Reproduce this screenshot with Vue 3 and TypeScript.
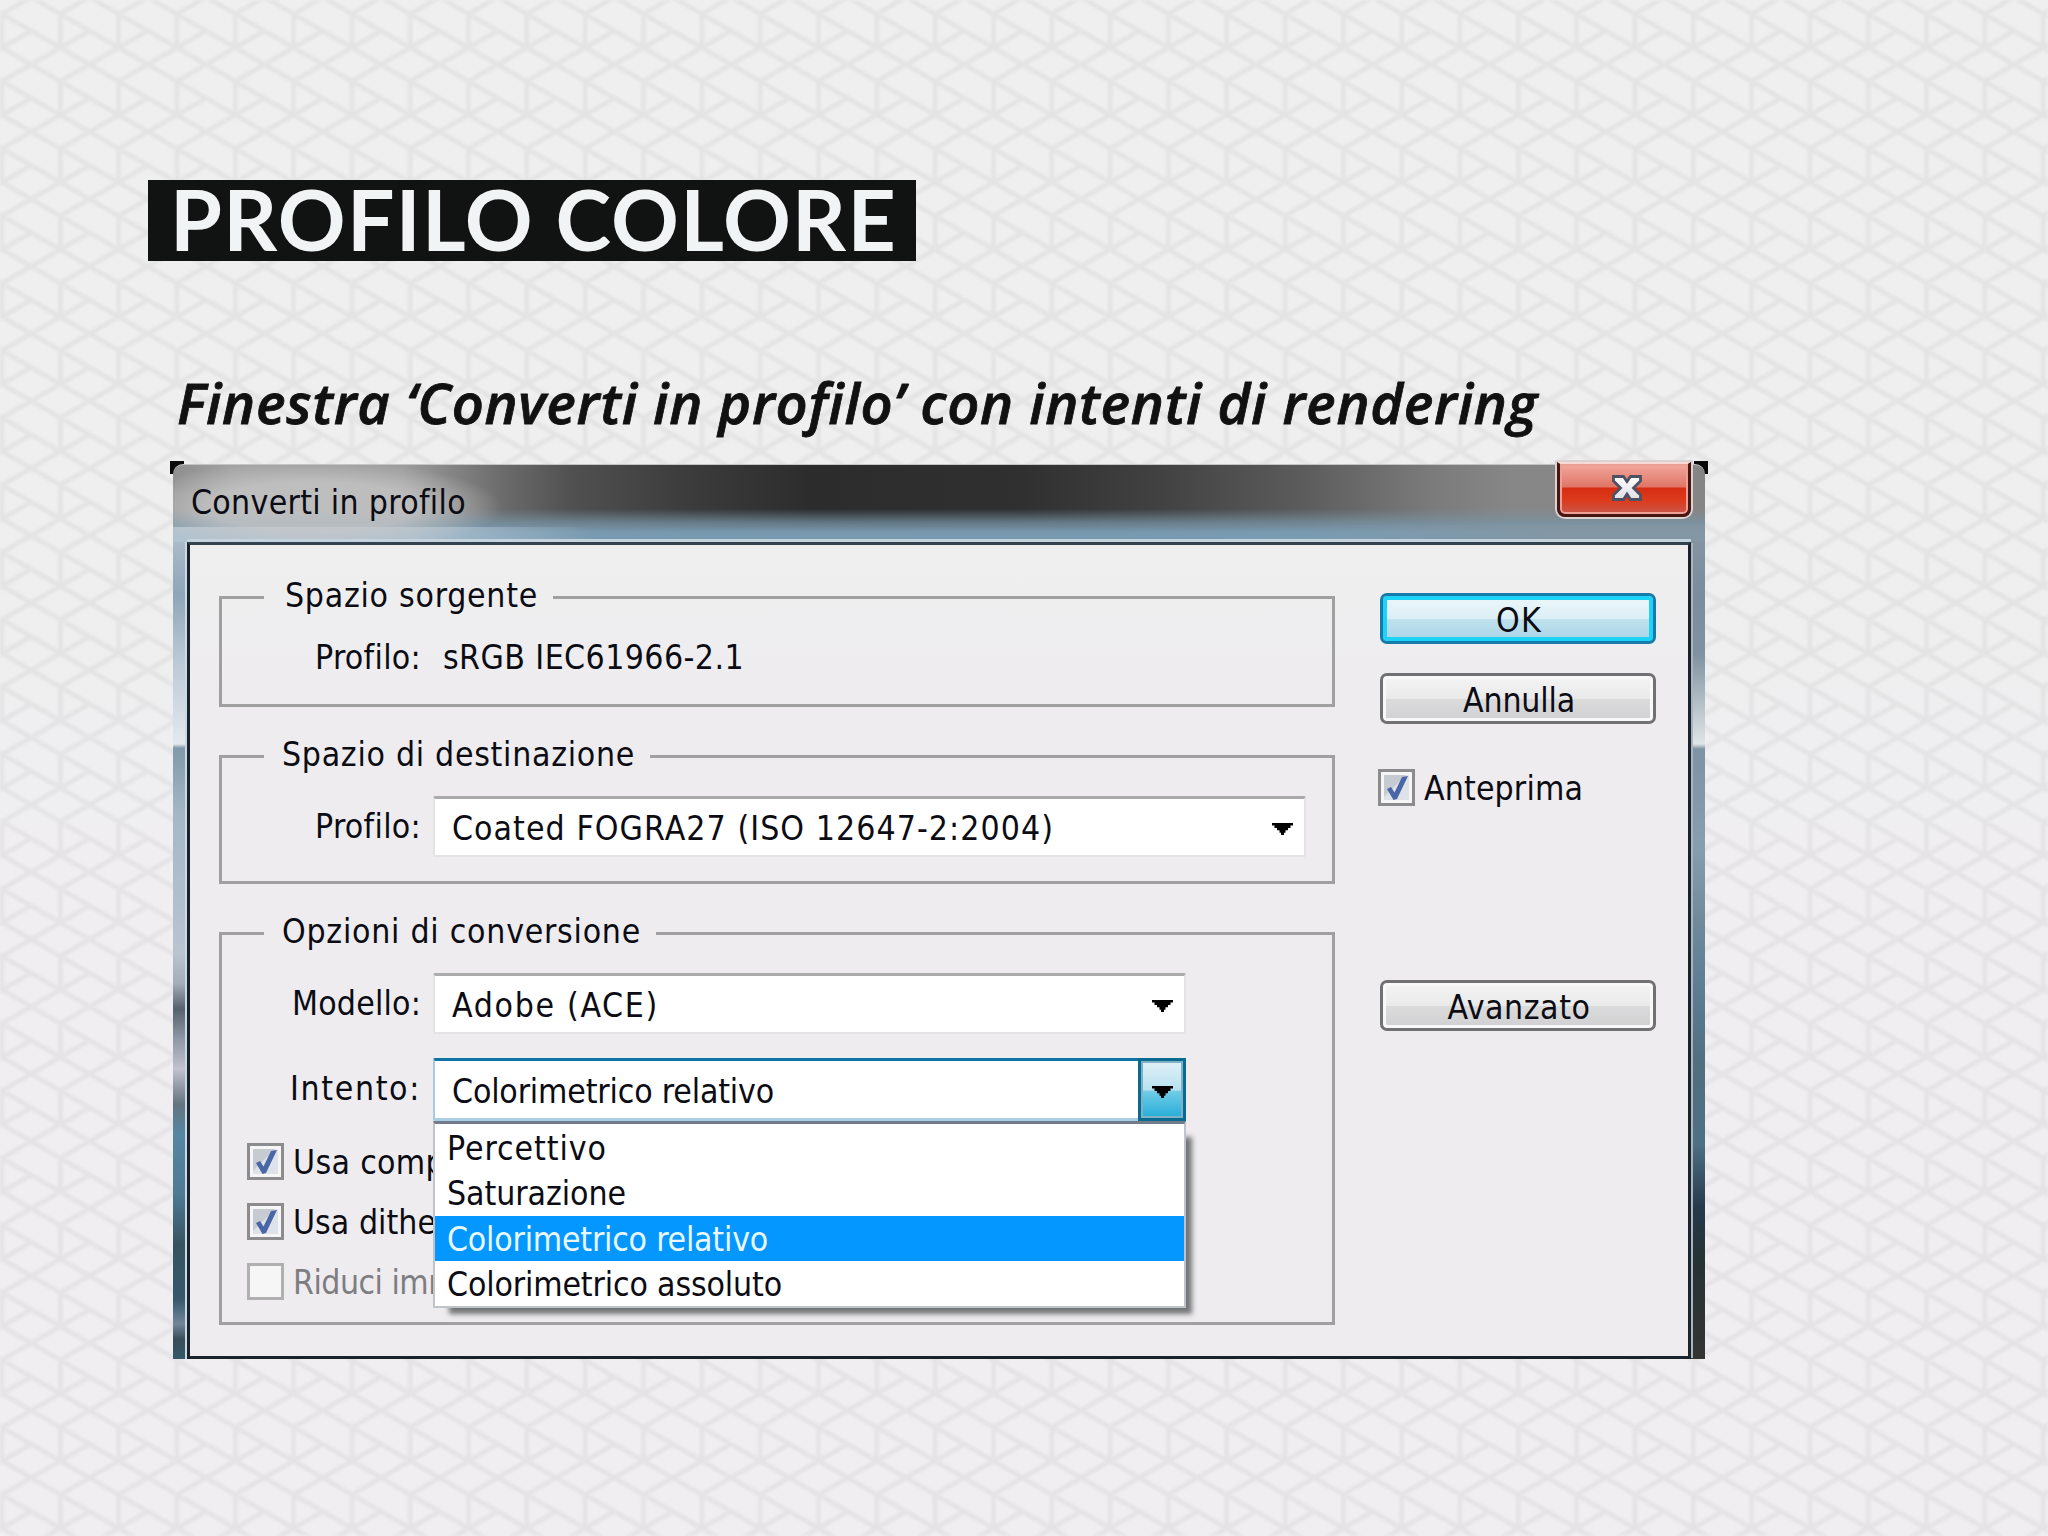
<script setup lang="ts">
import { ref } from 'vue'

interface Check {
  label: string
  width: number
  checked: boolean
}

const intents = [
  { label: 'Percettivo', width: 160 },
  { label: 'Saturazione', width: 179 },
  { label: 'Colorimetrico relativo', width: 321 },
  { label: 'Colorimetrico assoluto', width: 335 },
]
const selected = ref('Colorimetrico relativo')

const checks: Check[] = [
  { label: 'Usa comp', width: 152, checked: true },
  { label: 'Usa dithe', width: 143, checked: true },
  { label: 'Riduci imm', width: 164, checked: false },
]

// Tracks a label out (or in) until it fills the given width.
const vFit = {
  mounted(el: HTMLElement, binding: { value: number }) {
    el.style.letterSpacing = '0px'
    const natural = el.getBoundingClientRect().width
    const count = (el.textContent ?? '').length
    el.style.letterSpacing = `${(binding.value - natural) / count}px`
  },
}
</script>

<template>
  <main class="slide">
    <svg class="lattice" width="2048" height="1536" aria-hidden="true">
      <defs>
        <pattern id="lattice" x="1.98" y="14" width="58.32" height="67.3" patternUnits="userSpaceOnUse">
          <path
            d="M0 0V33.65M58.32 0V33.65M-5 -2.88L63.32 36.53M-5 30.77L63.32 70.18M-5 64.42L5 70.18M53.32 -2.88L63.32 2.88M-5 70.18L63.32 30.77M-5 36.53L29.16 16.82M-5 2.88L5 -2.88M53.32 70.18L63.32 64.42"
            fill="none"
            stroke="#8c8890"
            stroke-opacity=".1"
            stroke-width="4.6"
          />
        </pattern>
        <symbol id="box-on" viewBox="0 0 37 37">
          <rect x="1.5" y="1.5" width="34" height="34" fill="#f6f6f7" stroke="#8c8c8e" stroke-width="3" />
          <rect x="6" y="6" width="25" height="25" fill="#dfe3e9" />
          <path d="M6 6H28L6 28Z" fill="#c6cad1" />
          <path d="M9 20L13 18L16.500 23.500L24 8L30 7L19 30L15.500 31Z" fill="#4966a6" />
        </symbol>
        <symbol id="box-off" viewBox="0 0 37 37">
          <rect x="1.500" y="1.500" width="34" height="34" fill="#f7f6f7" stroke="#b0b0b1" stroke-width="3" />
        </symbol>
        <symbol id="arrow" viewBox="0 0 21 12">
          <path d="M0 0H21V2.500H18.500V5H16V7.300H13.500V9.700H12V12H9V9.700H7.500V7.300H5V5H2.500V2.500H0Z" fill="#000" />
        </symbol>
        <linearGradient id="cross" x1="0" y1="0" x2="0" y2="1">
          <stop offset="0" stop-color="#ffffff" />
          <stop offset="1" stop-color="#dedee4" />
        </linearGradient>
      </defs>
      <rect width="2048" height="1536" fill="url(#lattice)" />
    </svg>

    <h1 class="title"><span v-fit="727">PROFILO COLORE</span></h1>
    <h2 class="subtitle"><span v-fit="1361">Finestra ‘Converti in profilo’ con intenti di rendering</span></h2>

    <section class="window">
      <i class="corner left"></i>
      <i class="corner right"></i>
      <header class="bar">
        <span class="caption" v-fit="275">Converti in profilo</span>
        <button class="close" aria-label="Chiudi">
          <svg width="32" height="28" viewBox="0 0 32 28">
            <path
              d="M2.500 2.500H12.500L16 7.500L19.500 2.500H29.500V7L22.500 14L29.500 21V25.500H19.500L16 20L12.500 25.500H2.500V21L9.500 14L2.500 7Z"
              fill="url(#cross)"
              stroke="#4d5163"
              stroke-width="2.800"
            />
          </svg>
        </button>
      </header>

      <div class="panel">
        <div class="groups">
          <fieldset class="g1">
            <legend><span v-fit="253">Spazio sorgente</span></legend>
            <div class="row text">
              <span class="name"><span v-fit="106">Profilo:</span></span>
              <span class="value"><span v-fit="301">sRGB IEC61966-2.1</span></span>
            </div>
          </fieldset>

          <fieldset class="g2">
            <legend class="near"><span v-fit="353">Spazio di destinazione</span></legend>
            <div class="row">
              <span class="name"><span v-fit="106">Profilo:</span></span>
              <div class="select wide">
                <span v-fit="602">Coated FOGRA27 (ISO 12647-2:2004)</span>
                <svg class="tick" width="21" height="12"><use href="#arrow" /></svg>
              </div>
            </div>
          </fieldset>

          <fieldset class="g3">
            <legend class="near"><span v-fit="359">Opzioni di conversione</span></legend>
            <div class="row">
              <span class="name"><span v-fit="129">Modello:</span></span>
              <div class="select">
                <span v-fit="207">Adobe (ACE)</span>
                <svg class="tick" width="21" height="12"><use href="#arrow" /></svg>
              </div>
            </div>
            <div class="row second">
              <span class="name"><span v-fit="131">Intento:</span></span>
              <div class="select open">
                <span v-fit="322">{{ selected }}</span>
                <b class="drop"><svg width="21" height="12"><use href="#arrow" /></svg></b>
                <ul class="menu">
                  <li
                    v-for="item in intents"
                    :key="item.label"
                    :class="{ on: item.label === selected }"
                    @click="selected = item.label"
                  >
                    <span v-fit="item.width">{{ item.label }}</span>
                  </li>
                </ul>
              </div>
            </div>
            <div class="checks">
              <div v-for="c in checks" :key="c.label" class="check" :class="{ off: !c.checked }">
                <svg width="37" height="37">
                  <use :href="c.checked ? '#box-on' : '#box-off'" />
                </svg>
                <span v-fit="c.width">{{ c.label }}</span>
              </div>
            </div>
          </fieldset>
        </div>

        <aside class="side">
          <button class="btn ok"><span v-fit="46">OK</span></button>
          <button class="btn annulla"><span v-fit="112">Annulla</span></button>
          <div class="check preview">
            <svg width="37" height="37"><use href="#box-on" /></svg>
            <span v-fit="159">Anteprima</span>
          </div>
          <button class="btn avanzato"><span v-fit="143">Avanzato</span></button>
        </aside>
      </div>
    </section>
  </main>
</template>

<style>
body {
  margin: 0;
}
</style>

<style scoped>
* {
  box-sizing: border-box;
}
.slide {
  position: relative;
  width: 2048px;
  height: 1536px;
  overflow: hidden;
  padding: 180px 0 0 148px;
  background: linear-gradient(#efefef 0%, #efefef 30%, #f0eef1 65%, #f0eef1);
}
.lattice {
  position: absolute;
  inset: 0;
  filter: blur(0.8px);
}
.title {
  position: relative;
  width: 768px;
  height: 81px;
  margin: 0;
  padding-left: 22px;
  background: #111312;
  color: #f1f4f4;
  font: 700 84px/78px Lato, sans-serif;
  white-space: nowrap;
}
.title span,
.subtitle span,
.window span {
  display: inline-block;
  white-space: pre;
}
.subtitle {
  position: relative;
  height: 80px;
  margin: 101px 0 0 29px;
  color: #111;
  font: italic 600 56px/80px "Open Sans", sans-serif;
  -webkit-text-stroke: 0.8px #111;
}
.window {
  position: relative;
  width: 1532px;
  height: 895px;
  margin: 22px 0 0 25px;
  padding: 0 14px;
  font: 33.5px/40px "DejaVu Sans Condensed", "DejaVu Sans", sans-serif;
  font-stretch: condensed;
  color: #0c0c14;
  border-radius: 10px 10px 0 0;
  background:
    linear-gradient(#8f8f8f 0, #adb0b4 45px, #a9bac9 80px, #8fa5b9 130px, #b7c6d3 190px, #e3e9ee 280px, #8199aa 284px, #a5b7c7 350px, #b9c4d1 490px, #a3acb9 520px, #56626e 545px, #8f98a6 575px, #c2c1cf 605px, #63757f 640px, #5586a3 670px, #4e7a94 730px, #375362 780px, #36586a 835px, #72869b 860px, #3a4d58 875px, #34586a 895px) 0 0 / 15px 100% no-repeat,
    linear-gradient(#878787 0, #858687 45px, #84939f 80px, #7a8d9e 130px, #7f929f 190px, #dfe5e8 280px, #7e93a4 285px, #879eb0 380px, #6f899b 460px, #5b7c92 530px, #506f7f 600px, #4d7083 680px, #26384a 745px, #263333 800px, #333533 895px) 100% 0 / 15px 100% no-repeat;
}
.corner {
  position: absolute;
  z-index: -1;
  top: -3px;
  width: 14px;
  height: 13px;
  background: #0a0a0a;
}
.corner.left {
  left: -3px;
}
.corner.right {
  right: -3px;
}
.window,
.title,
.subtitle {
  z-index: 0;
}
.bar {
  display: flex;
  justify-content: space-between;
  align-items: flex-start;
  height: 78px;
  margin: 0 -14px;
  padding: 18px 12px 0 18px;
  border-radius: 10px 10px 0 0;
  border-top: 1px solid #c4c4c4;
  background:
    radial-gradient(ellipse 190px 46px at 140px 42px, rgba(200, 200, 201, 0.75) 55%, rgba(200, 200, 201, 0) 100%),
    linear-gradient(90deg, rgba(182, 199, 212, 0.9) 0, rgba(182, 199, 212, 0.8) 240px, rgba(182, 199, 212, 0) 420px) 0 62px / 100% 16px no-repeat,
    linear-gradient(90deg, rgba(135, 148, 158, 0) 1130px, rgba(135, 148, 158, 0.7) 1400px) 0 60px / 100% 18px no-repeat,
    linear-gradient(rgba(120, 150, 170, 0) 44px, rgba(120, 148, 166, 0.7) 57px, rgba(122, 157, 180, 0.95) 67px, #7b9db3 77px),
    linear-gradient(90deg, #8f8f8f 0, #a2a2a2 60px, #9d9d9d 230px, #6b6b6b 330px, #505050 400px, #3b3b3b 520px, #2c2c2c 640px, #303030 850px, #424242 990px, #5c5c5c 1130px, #7b7b7b 1260px, #878787 1340px, #858585);
}
.caption {
  line-height: 40px;
}
.close {
  display: flex;
  justify-content: center;
  align-items: center;
  width: 134px;
  height: 55px;
  margin: -21px 2px 0 0;
  padding: 0 0 2px 5px;
  border: 3px solid #4b1512;
  border-top: 2px solid #f7d9d6;
  border-radius: 0 0 8px 8px;
  background: linear-gradient(#f2a99f 0, #df7565 23px, #d62d12 24px, #dd3a1c 36px, #c9574a 50px);
  box-shadow: 0 0 0 2px #d9d4d2, inset 0 0 0 2px #eba096;
}
.panel {
  display: flex;
  height: 817px;
  padding: 30px 0 0 29px;
  border: 3px solid #18232d;
  border-top-color: #34424f;
  background: linear-gradient(#efefef, #eeecef 150px);
  box-shadow: 0 -3px 0 #c3d2dc, 3px 0 0 -1px #aab4bc, -2px 0 0 #ccd9e2;
}
.groups {
  width: 1116px;
}
fieldset {
  min-width: 0;
  margin: 0 0 27px;
  padding: 0;
  border: 3px solid #a0a0a1;
}
legend {
  height: 44px;
  margin-left: 42px;
  padding: 1px 15px 3px 21px;
}
legend.near {
  padding-left: 18px;
}
.g1 {
  height: 132px;
}
.g2 {
  height: 150px;
}
.g3 {
  height: 414px;
  margin: 0;
}
.row {
  display: flex;
  height: 61px;
  margin-top: 18px;
}
.row.text {
  margin-top: 8px;
}
.row.second {
  height: 63px;
  margin-top: 24px;
}
.name {
  width: 199px;
  margin-right: 12px;
  padding-top: 11px;
  text-align: right;
}
.value {
  padding: 11px 0 0 10px;
}
.select {
  display: flex;
  position: relative;
  align-items: center;
  justify-content: space-between;
  width: 753px;
  padding: 4px 11px 0 17px;
  border: 2px solid #e4e4e6;
  border-top: 3px solid #ababac;
  border-radius: 2px;
  background: #fff;
}
.select.wide {
  width: 873px;
}
.open {
  padding-right: 0;
  border: 2px solid #a6cbe0;
  border-top: 3px solid #0d74a3;
  border-bottom: 3px solid #a9cde2;
}
.drop {
  display: flex;
  align-items: center;
  justify-content: center;
  align-self: stretch;
  width: 48px;
  margin: -7px -2px -3px 0;
  padding-top: 4px;
  border: 3px solid #0b6a8f;
  background: linear-gradient(#e2f1f8, #b9e1f0 50%, #6fcbe6 54%, #25add8);
  box-shadow: inset 0 0 0 2px #7fb0c4;
}
.menu {
  position: absolute;
  z-index: 2;
  top: 60px;
  left: -2px;
  width: 753px;
  height: 187px;
  margin: 0;
  padding: 1px 0 0;
  list-style: none;
  background: #fff;
  border: 2px solid #bfc3ca;
  border-top: 3px solid #717b8c;
  box-shadow: 11px 11px 5px -5px rgba(50, 54, 54, 0.65);
}
.menu li {
  height: 45.3px;
  padding: 4px 0 0 12px;
}
.menu .on {
  background: #0397ff;
  color: #e9f7ff;
}
.checks {
  width: 212px;
  margin: 22px 0 0 25px;
}
.checks .check {
  width: 188px;
}
.check {
  display: flex;
  height: 59.8px;
  overflow: hidden;
}
.check svg {
  flex: none;
  margin-right: 9px;
}
.check.off {
  color: #7e7e82;
}
.side {
  width: 280px;
  margin-left: 45px;
  padding-top: 18px;
}
.btn {
  display: flex;
  align-items: center;
  justify-content: center;
  width: 276px;
  height: 51px;
  padding: 4px 0 0 2px;
  border: 3px solid #717173;
  border-radius: 7px;
  background: linear-gradient(#f4f4f4, #eaeaea 50%, #dcdbdc 52%, #d0cfd1);
  box-shadow: inset 0 0 0 3px #f8f8f9;
  color: inherit;
  font: inherit;
}
.ok {
  border-color: #167ba8;
  background: linear-gradient(#edf6f9, #dceff6 50%, #c0e1ee 52%, #a9d5e6);
  box-shadow: inset 0 0 0 4px #1ed3f8;
}
.annulla {
  margin-top: 29px;
}
.preview {
  width: 212px;
  height: 40px;
  margin: 45px 0 0 -2px;
}
.avanzato {
  margin-top: 171px;
}
</style>
